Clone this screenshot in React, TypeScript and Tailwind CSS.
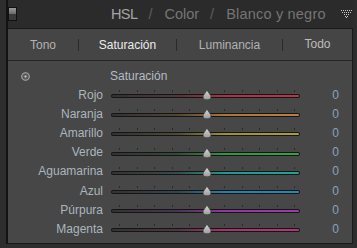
import React from "react";

const rows = [
  { name: "Rojo", grad: "bg-[linear-gradient(to_right,#333_0%,#523638_35%,#a83444_60%,#b43848_100%)]" },
  { name: "Naranja", grad: "bg-[linear-gradient(to_right,#333_0%,#524436_35%,#aa7440_60%,#b88046_100%)]" },
  { name: "Amarillo", grad: "bg-[linear-gradient(to_right,#333_0%,#4e4a36_35%,#9c9032_60%,#aa9e36_100%)]" },
  { name: "Verde", grad: "bg-[linear-gradient(to_right,#333_0%,#364a3a_35%,#349444_60%,#38a048_100%)]" },
  { name: "Aguamarina", grad: "bg-[linear-gradient(to_right,#333_0%,#364c4c_35%,#229890_60%,#26a098_100%)]" },
  { name: "Azul", grad: "bg-[linear-gradient(to_right,#333_0%,#364450_35%,#287eaa_60%,#2a88b6_100%)]" },
  { name: "Púrpura", grad: "bg-[linear-gradient(to_right,#333_0%,#48364e_35%,#8e38a0_60%,#9a3eaa_100%)]" },
  { name: "Magenta", grad: "bg-[linear-gradient(to_right,#333_0%,#503644_35%,#aa326e_60%,#b4367a_100%)]" },
];

function Thumb() {
  return (
    <svg width="10" height="10" viewBox="0 0 10 10" className="absolute left-[91px] top-0">
      <defs>
        <linearGradient id="tg" x1="0" y1="0" x2="0" y2="1">
          <stop offset="0" stopColor="#d8d8d8" />
          <stop offset="1" stopColor="#9a9a9a" />
        </linearGradient>
      </defs>
      <path d="M5 0.3 L8.6 5.6 Q10 9.8 5 9.8 Q0 9.8 1.4 5.6 Z" fill="url(#tg)" stroke="#3a3a3a" strokeWidth="0.6" />
    </svg>
  );
}

function Slider({ grad }: { grad: string }) {
  return (
    <div className="relative w-[189px] h-[12px] mt-[3px]">
      <div className="absolute left-[8px] top-0 w-[176px] h-[2px] flex justify-between">
        {Array.from({ length: 11 }).map((_, i) => (
          <div key={i} className="w-px h-[2px] bg-[#2a2a2a]" />
        ))}
      </div>
      <div className="absolute left-0 top-[4px] w-[189px] h-[4px] rounded-full bg-[#151515] p-[1px]">
        <div className={"h-[2px] w-full rounded-full " + grad} />
      </div>
      <Thumb />
    </div>
  );
}

function Triangle() {
  const dots: [number, number][] = [];
  [0, 2, 4, 6, 8, 10].forEach((x) => dots.push([x, 0]));
  [1, 3, 5, 7, 9].forEach((x) => dots.push([x, 2]));
  [3, 5, 7].forEach((x) => dots.push([x, 4]));
  [4, 6].forEach((x) => dots.push([x, 6]));
  dots.push([5, 7]);
  return (
    <svg width="11" height="8" viewBox="0 0 11 8">
      {dots.map(([x, y], i) => (
        <rect key={i} x={x} y={y} width="1" height="1" fill="#c8c8c8" />
      ))}
    </svg>
  );
}

export default function App() {
  const font = { fontFamily: '"Liberation Sans", Arial, sans-serif' };
  return (
    <div className="w-[357px] h-[248px] bg-[#2d2d2d] flex pl-[6px] pr-[4px] pb-[4px] overflow-hidden" style={font}>
      <div className="flex-1 flex flex-col border-l-2 border-[#131313]">
        <div className="h-[28px] flex items-center bg-[#2b2b2b] shrink-0">
          <div className="w-[9px] h-[14px] border border-[#111] flex flex-col">
            <div className="flex-1 bg-[linear-gradient(#9a9a9a,#6a6a6a)]" />
            <div className="flex-1 bg-[#3a3a3a]" />
          </div>
          <span className="ml-[94px] text-[14.5px] leading-none text-[#a4a4a4] tracking-[-0.6px]">HSL</span>
          <span className="ml-[11px] text-[14.5px] leading-none text-[#5e5e5e]">/</span>
          <span className="ml-[12px] text-[14.5px] leading-none text-[#757575]">Color</span>
          <span className="ml-[11px] text-[14.5px] leading-none text-[#5e5e5e]">/</span>
          <span className="ml-[12px] text-[14.5px] leading-none text-[#757575] tracking-[0.2px]">Blanco y negro</span>
          <div className="ml-auto mr-[1px] flex items-center">
            <Triangle />
          </div>
        </div>
        <div className="flex-1 flex flex-col border-t border-r border-b border-[#1a1a1a] bg-[#474747]">
          <div className="h-[31px] flex items-center bg-[#454545] text-[12px] shrink-0">
            <div className="w-[70px] text-center text-[#b2b2b2]">Tono</div>
            <div className="w-px h-[12px] bg-[#2a2a2a]" />
            <div className="w-[97px] text-center text-[#ececec]">Saturación</div>
            <div className="w-px h-[12px] bg-[#2a2a2a]" />
            <div className="w-[105px] text-center text-[#b2b2b2]">Luminancia</div>
            <div className="w-px h-[12px] bg-[#2a2a2a]" />
            <div className="flex-1 text-center text-[#bcbcbc] -mt-[2px]">Todo</div>
          </div>
          <div className="h-px bg-[#262626] shrink-0" />
          <div className="flex-1 flex flex-col pt-[7px]">
            <div className="h-[16px] flex items-center relative">
              <div className="w-[13px]" />
              <svg width="9" height="9" viewBox="0 0 9 9">
                <circle cx="4.5" cy="4.5" r="3.8" fill="#5a5a5a" stroke="#a8a8a8" strokeWidth="1.1" />
                <circle cx="4.5" cy="4.5" r="1.1" fill="#d0d0d0" />
              </svg>
              <span className="ml-[80px] text-[12px] text-[#b4bcc2]">Saturación</span>
            </div>
            <div className="mt-[1px] flex flex-col">
              {rows.map((r) => (
                <div key={r.name} className="h-[19.2px] flex items-center">
                  <div className="w-[95px] text-right text-[12px] leading-none text-[#aab6be]">{r.name}</div>
                  <div className="w-[8px]" />
                  <Slider grad={r.grad} />
                  <div className="w-[39px] text-right text-[12px] leading-none text-[#8aa2ba]">0</div>
                </div>
              ))}
            </div>
          </div>
        </div>
      </div>
    </div>
  );
}
